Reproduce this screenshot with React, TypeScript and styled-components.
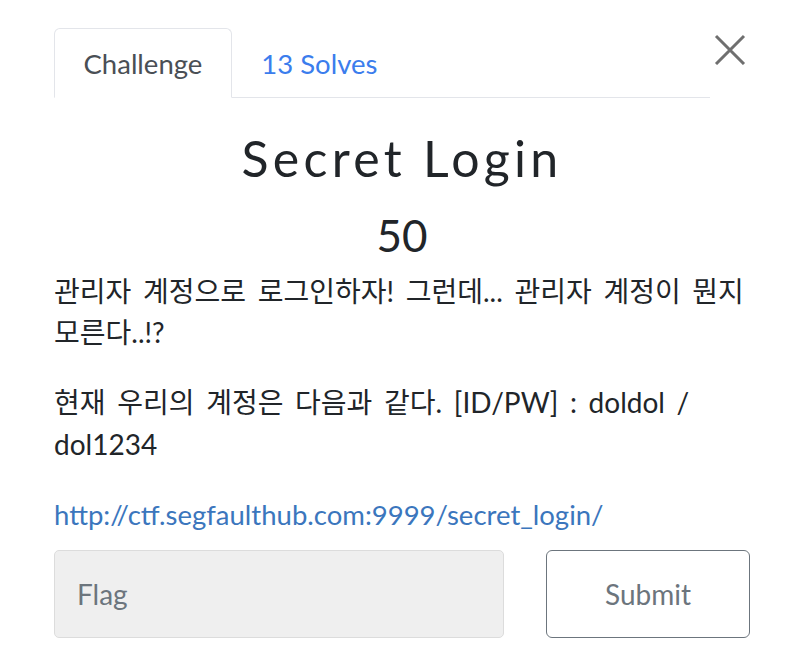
import React from "react";
import styled, { createGlobalStyle } from "styled-components";

const GlobalStyle = createGlobalStyle`
  body {
    margin: 0;
    background: #ffffff;
    font-family: Lato, "Noto Sans CJK KR", sans-serif;
    color: #212529;
  }
`;

const Modal = styled.div`
  width: 696px;
  padding: 28px 50px 0 54px;
`;

const Header = styled.div`
  display: flex;
  align-items: flex-start;
`;

const Tabs = styled.div`
  display: flex;
  flex: 0 0 656px;
  border-bottom: 1.5px solid #e3e5ea;
`;

const Tab = styled.div<{ $active?: boolean }>`
  height: 70px;
  box-sizing: border-box;
  padding: 0 28.5px;
  display: flex;
  align-items: center;
  font-size: 27.5px;
  margin-bottom: -1.5px;
  color: ${({ $active }) => ($active ? "#4a4f55" : "#3b7ded")};
  background: ${({ $active }) => ($active ? "#fff" : "transparent")};
  border: 1.5px solid ${({ $active }) => ($active ? "#e3e5ea" : "transparent")};
  border-bottom-color: ${({ $active }) => ($active ? "#fff" : "transparent")};
  border-radius: 6px 6px 0 0;
`;

const Close = styled.button`
  margin-left: auto;
  margin-top: 1px;
  background: none;
  border: none;
  padding: 0;
  width: 40px;
  height: 40px;
  display: flex;
  align-items: center;
  justify-content: center;
`;

const Title = styled.h1`
  margin: 30px 0 0;
  text-align: center;
  font-weight: 400;
  font-size: 50px;
  letter-spacing: 4.3px;
  line-height: 60px;
  color: #212529;
`;

const Points = styled.h3`
  margin: 21px 0 0;
  text-align: center;
  font-weight: 400;
  font-size: 44px;
  line-height: 52px;
  color: #212529;
`;

const Description = styled.div`
  margin-top: 10px;
  font-size: 28px;
  line-height: 41.5px;
  word-spacing: 4.5px;
  word-break: keep-all;
  color: #212529;
`;

const Para = styled.p`
  margin: 0 0 28.5px;
  &:last-child {
    margin-bottom: 0;
  }
`;

const Link = styled.a`
  font-size: 27.5px;
  color: #3b76bd;
  text-decoration: none;
  word-spacing: normal;
`;

const FormRow = styled.div`
  display: flex;
  gap: 42px;
  margin-top: 15px;
`;

const FlagInput = styled.input`
  width: 450px;
  height: 88px;
  box-sizing: border-box;
  background: #efefef;
  border: 1.5px solid #dcdcdc;
  border-radius: 5px;
  padding: 0 22px;
  font-family: Lato, sans-serif;
  font-size: 28px;
  color: #495057;
  &::placeholder {
    color: #6c757d;
  }
`;

const SubmitButton = styled.button`
  width: 204px;
  height: 88px;
  box-sizing: border-box;
  background: #fff;
  border: 1.5px solid #6c757d;
  border-radius: 6px;
  font-family: Lato, sans-serif;
  font-size: 28px;
  color: #6c757d;
`;

export default function App() {
  return (
    <>
      <GlobalStyle />
      <Modal>
        <Header>
          <Tabs>
            <Tab $active>Challenge</Tab>
            <Tab>13 Solves</Tab>
          </Tabs>
          <Close aria-label="Close">
            <svg width="32" height="32" viewBox="0 0 32 32">
              <path d="M2 3 L30 31 M30 3 L2 31" stroke="#6f6f6f" strokeWidth="3" />
            </svg>
          </Close>
        </Header>
        <Title>Secret Login</Title>
        <Points>50</Points>
        <Description>
          <Para>관리자 계정으로 로그인하자! 그런데... 관리자 계정이 뭔지 모른다..!?</Para>
          <Para>현재 우리의 계정은 다음과 같다. [ID/PW] : doldol / dol1234</Para>
          <Para>
            <Link href="#">http://ctf.segfaulthub.com:9999/secret_login/</Link>
          </Para>
        </Description>
        <FormRow>
          <FlagInput placeholder="Flag" />
          <SubmitButton>Submit</SubmitButton>
        </FormRow>
      </Modal>
    </>
  );
}
